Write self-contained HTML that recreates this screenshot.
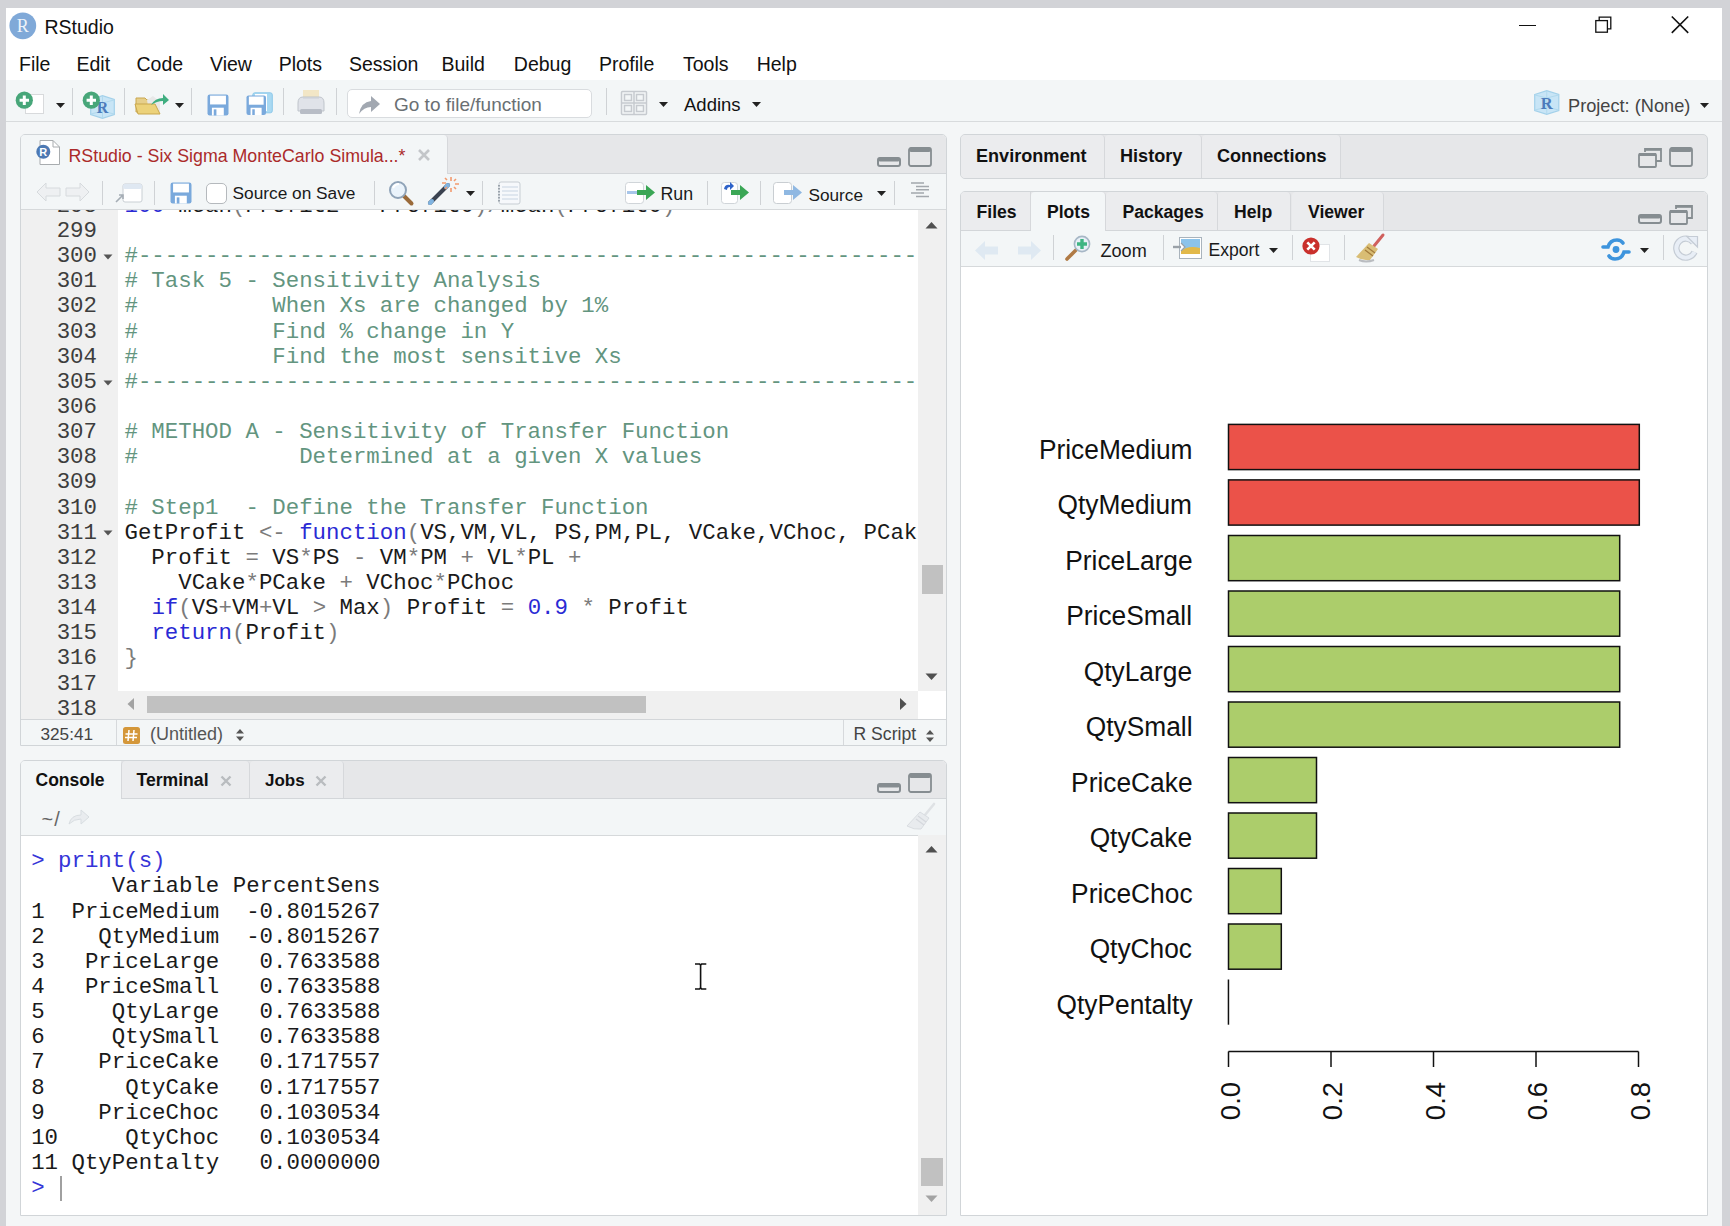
<!DOCTYPE html>
<html><head><meta charset="utf-8">
<style>
*{margin:0;padding:0;box-sizing:border-box}
html,body{width:1730px;height:1226px;overflow:hidden;background:#d2d3d7;font-family:"Liberation Sans",sans-serif;color:#111;position:relative}
.a{position:absolute}
.t{position:absolute;white-space:pre;line-height:1}
</style></head><body>
<div class="a" style="left:6px;top:8px;width:1716px;height:1218px;background:#f4f6f7;"></div>
<div class="a" style="left:6px;top:8px;width:1716px;height:72px;background:#ffffff;"></div>
<div class="a" style="left:6px;top:80px;width:1716px;height:41px;background:#f3f6f7;"></div>
<div class="a" style="left:6px;top:120.6px;width:1716px;height:1.2px;background:#d8dbdd;"></div>
<svg class="a" style="left:9px;top:12px;" width="28" height="28" viewBox="0 0 28 28"><circle cx="13.8" cy="13.8" r="13.4" fill="#80a9d8"/><text x="13.8" y="20" font-family="Liberation Serif" font-size="18" fill="#eef3fa" text-anchor="middle">R</text></svg>
<div class="t" style="left:44.5px;top:18.09px;font-size:19.5px;color:#111;font-family:'Liberation Sans',sans-serif;">RStudio</div>
<div class="a" style="left:1519px;top:25px;width:17px;height:1.3px;background:#111;"></div>
<svg class="a" style="left:1590px;top:12px;" width="26" height="26" viewBox="0 0 26 26"><rect x="5.8" y="8.6" width="11.6" height="11.6" fill="none" stroke="#111" stroke-width="1.3"/><path d="M9.2 8.6V5.2H20.8V16.8H17.4" fill="none" stroke="#111" stroke-width="1.3"/></svg>
<svg class="a" style="left:1666px;top:11px;" width="28" height="28" viewBox="0 0 28 28"><path d="M5.8 5.5L22.2 21.9M22.2 5.5L5.8 21.9" stroke="#111" stroke-width="1.6"/></svg>
<div class="t" style="left:19.0px;top:55.09px;font-size:19.5px;color:#111;font-family:'Liberation Sans',sans-serif;">File</div>
<div class="t" style="left:76.5px;top:55.09px;font-size:19.5px;color:#111;font-family:'Liberation Sans',sans-serif;">Edit</div>
<div class="t" style="left:136.5px;top:55.09px;font-size:19.5px;color:#111;font-family:'Liberation Sans',sans-serif;">Code</div>
<div class="t" style="left:210.0px;top:55.09px;font-size:19.5px;color:#111;font-family:'Liberation Sans',sans-serif;">View</div>
<div class="t" style="left:278.7px;top:55.09px;font-size:19.5px;color:#111;font-family:'Liberation Sans',sans-serif;">Plots</div>
<div class="t" style="left:349.0px;top:55.09px;font-size:19.5px;color:#111;font-family:'Liberation Sans',sans-serif;">Session</div>
<div class="t" style="left:441.5px;top:55.09px;font-size:19.5px;color:#111;font-family:'Liberation Sans',sans-serif;">Build</div>
<div class="t" style="left:513.8px;top:55.09px;font-size:19.5px;color:#111;font-family:'Liberation Sans',sans-serif;">Debug</div>
<div class="t" style="left:599.0px;top:55.09px;font-size:19.5px;color:#111;font-family:'Liberation Sans',sans-serif;">Profile</div>
<div class="t" style="left:683.0px;top:55.09px;font-size:19.5px;color:#111;font-family:'Liberation Sans',sans-serif;">Tools</div>
<div class="t" style="left:756.7px;top:55.09px;font-size:19.5px;color:#111;font-family:'Liberation Sans',sans-serif;">Help</div>
<div class="a" style="left:24.8px;top:93.8px;width:19px;height:20.5px;background:#fff;border:1px solid #d8dadc"></div>
<svg class="a" style="left:15px;top:91px;" width="18" height="18" viewBox="0 0 18 18"><circle cx="9.3" cy="9.2" r="8.6" fill="#47a679"/><path d="M9.3 4.5V13.9M4.6 9.2H14" stroke="#fff" stroke-width="3"/></svg>
<svg class="a" style="left:56.0px;top:102.5px;" width="9" height="5" viewBox="0 0 9 5"><path d="M0 0H9L4.5 5Z" fill="#222"/></svg>
<div class="a" style="left:72px;top:88px;width:1px;height:27px;background:#cfd2d5;"></div>
<svg class="a" style="left:90px;top:94.5px;" width="25" height="24" viewBox="0 0 25 24"><path d="M0.7 4.5L12.5 0.7L24.3 4.5V19.5L12.5 23.3L0.7 19.5Z" fill="#c8e5f6" stroke="#a3d1ea" stroke-width="1.2"/><path d="M12.5 1V23M1 5L12.5 8L24 5M1 19L12.5 16L24 19" stroke="#b0d9ee" stroke-width="1" fill="none"/><text x="12.5" y="17.759999999999998" font-family="Liberation Serif" font-weight="bold" font-size="15.84" fill="#4d7cbc" text-anchor="middle">R</text></svg>
<svg class="a" style="left:82px;top:91px;" width="18" height="18" viewBox="0 0 18 18"><circle cx="9.3" cy="9.2" r="8.6" fill="#47a679"/><path d="M9.3 4.5V13.9M4.6 9.2H14" stroke="#fff" stroke-width="3"/></svg>
<div class="a" style="left:124px;top:88px;width:1px;height:27px;background:#cfd2d5;"></div>
<svg class="a" style="left:133px;top:92px;" width="38" height="25" viewBox="0 0 38 25"><path d="M3 6H12L14 8H24V20H3Z" fill="#e6cf8b" stroke="#c9a74e" stroke-width="1"/><path d="M14 8L20 4L27 10V20H16Z" fill="#e8e8e8"/><path d="M2 12H22L27 22H5Z" fill="#ecd27a" stroke="#c9a74e" stroke-width="1"/><path d="M18 13Q22 6 30 6V2L36 8L30 13V9Q24 9 18 13Z" fill="#3fae80"/></svg>
<svg class="a" style="left:175.2px;top:102.5px;" width="9" height="5" viewBox="0 0 9 5"><path d="M0 0H9L4.5 5Z" fill="#222"/></svg>
<div class="a" style="left:191px;top:88px;width:1px;height:27px;background:#cfd2d5;"></div>
<svg class="a" style="left:207px;top:93.5px;" width="22.5" height="22.5" viewBox="0 0 22.5 22.5"><g transform="scale(1.0238095238095237)"><rect x="0.5" y="0.5" width="20.5" height="20.5" rx="2.2" fill="#7aa9dc"/><rect x="3" y="1.6" width="15.5" height="8.6" fill="#fff"/><rect x="4.8" y="13.4" width="11.6" height="7.6" fill="#fff"/><rect x="6.6" y="15" width="2.6" height="6" fill="#7aa9dc"/></g></svg>
<svg class="a" style="left:252px;top:91.5px;" width="22" height="22" viewBox="0 0 22 22"><rect x="0.8" y="0.8" width="19.5" height="20" rx="2" fill="#a9d9f2" stroke="#8cc8ea" stroke-width="1"/><rect x="3" y="2" width="12" height="17" fill="#fff"/></svg>
<svg class="a" style="left:246px;top:95px;" width="21" height="21" viewBox="0 0 21 21"><g transform="scale(0.9523809523809523)"><rect x="0.5" y="0.5" width="20.5" height="20.5" rx="2.2" fill="#7aa9dc"/><rect x="3" y="1.6" width="15.5" height="8.6" fill="#fff"/><rect x="4.8" y="13.4" width="11.6" height="7.6" fill="#fff"/><rect x="6.6" y="15" width="2.6" height="6" fill="#7aa9dc"/></g></svg>
<div class="a" style="left:283px;top:88px;width:1px;height:27px;background:#cfd2d5;"></div>
<svg class="a" style="left:295px;top:88px;" width="32" height="30" viewBox="0 0 32 30"><rect x="8" y="2" width="16" height="12" fill="#f2e6c6"/><path d="M3 15Q3 9 8 9H24Q29 9 29 15V23H3Z" fill="#e0e3e9" stroke="#bfc4cb" stroke-width="1"/><path d="M8 10H24" stroke="#c9ced5" stroke-width="1"/><rect x="5" y="21" width="22" height="5" rx="1.5" fill="#b8bdc6"/></svg>
<div class="a" style="left:336px;top:88px;width:1px;height:27px;background:#cfd2d5;"></div>
<div class="a" style="left:347px;top:89px;width:245px;height:29px;background:#fff;border:1px solid #d9dcdf;border-radius:5px"></div>
<svg class="a" style="left:356px;top:92px;" width="26" height="24" viewBox="0 0 26 24"><path d="M3 22Q5 10 15 9V4L24 12L15 20V15Q8 15 3 22Z" fill="#a2a8b1"/></svg>
<div class="t" style="left:394.0px;top:95.41px;font-size:19px;color:#6a6f73;font-family:'Liberation Sans',sans-serif;">Go to file/function</div>
<div class="a" style="left:606px;top:88px;width:1px;height:27px;background:#cfd2d5;"></div>
<svg class="a" style="left:619px;top:88.5px;" width="30" height="28" viewBox="0 0 30 28"><g fill="none" stroke="#c6cacf" stroke-width="1.5"><rect x="2.5" y="2.5" width="25" height="23" rx="1"/><path d="M15 3V25M3 14H27"/><rect x="5.5" y="5.5" width="7" height="6"/><rect x="17.5" y="5.5" width="7" height="6"/><rect x="5.5" y="16.5" width="7" height="6"/><rect x="17.5" y="16.5" width="7" height="6"/></g></svg>
<svg class="a" style="left:659.0px;top:101.8px;" width="9" height="5" viewBox="0 0 9 5"><path d="M0 0H9L4.5 5Z" fill="#222"/></svg>
<div class="t" style="left:684.0px;top:95.84px;font-size:18.5px;color:#111;font-family:'Liberation Sans',sans-serif;">Addins</div>
<svg class="a" style="left:751.5px;top:101.8px;" width="9" height="5" viewBox="0 0 9 5"><path d="M0 0H9L4.5 5Z" fill="#222"/></svg>
<svg class="a" style="left:1534px;top:90px;" width="25.5" height="25" viewBox="0 0 25.5 25"><path d="M0.7 4.5L12.75 0.7L24.8 4.5V20.5L12.75 24.3L0.7 20.5Z" fill="#c8e5f6" stroke="#a3d1ea" stroke-width="1.2"/><path d="M12.75 1V24M1 5L12.75 8L24.5 5M1 20L12.75 17L24.5 20" stroke="#b0d9ee" stroke-width="1" fill="none"/><text x="12.75" y="18.5" font-family="Liberation Serif" font-weight="bold" font-size="16.5" fill="#4d7cbc" text-anchor="middle">R</text></svg>
<div class="t" style="left:1568.0px;top:96.59px;font-size:18.2px;color:#444;font-family:'Liberation Sans',sans-serif;">Project: (None)</div>
<svg class="a" style="left:1700.0px;top:102.5px;" width="9" height="5" viewBox="0 0 9 5"><path d="M0 0H9L4.5 5Z" fill="#222"/></svg>
<div class="a" style="left:20px;top:134px;width:927px;height:612px;background:#fff;border:1px solid #d1d5d8;border-radius:5px 5px 0 0"></div>
<div class="a" style="left:21px;top:135px;width:925px;height:38px;background:#e6e7e9;border-radius:4px 4px 0 0"></div>
<div class="a" style="left:21px;top:173px;width:925px;height:1px;background:#d3d6d9;"></div>
<div class="a" style="left:21px;top:135px;width:427px;height:39px;background:#f3f6f7;border-right:1px solid #d6d8db;border-radius:4px 4px 0 0"></div>
<svg class="a" style="left:36px;top:139px;" width="28" height="28" viewBox="0 0 28 28"><path d="M4 1.5H17L23.5 8V25.5H4Z" fill="#fff" stroke="#a8acaf" stroke-width="1"/><path d="M17 1.5V8H23.5" fill="none" stroke="#a8acaf" stroke-width="1"/><circle cx="7.3" cy="12.8" r="7" fill="#4d79b3"/><text x="7.3" y="17" font-family="Liberation Sans" font-weight="bold" font-size="11" fill="#fff" text-anchor="middle">R</text></svg>
<div class="t" style="left:68.5px;top:148.13px;font-size:17.8px;color:#ab2a2a;font-family:'Liberation Sans',sans-serif;">RStudio - Six Sigma MonteCarlo Simula...*</div>
<svg class="a" style="left:417px;top:148px;" width="14" height="14" viewBox="0 0 14 14"><path d="M2 2L12 12M12 2L2 12" stroke="#c3c6c9" stroke-width="2.6"/></svg>
<svg class="a" style="left:877px;top:157px;" width="24" height="10" viewBox="0 0 24 10"><rect x="1" y="1" width="22" height="8" rx="2" fill="none" stroke="#868d91" stroke-width="2"/><rect x="1" y="0.5" width="22" height="4" rx="2" fill="#868d91"/></svg>
<svg class="a" style="left:907.5px;top:147px;" width="24" height="20" viewBox="0 0 24 20"><rect x="1" y="1" width="22" height="18" rx="2" fill="none" stroke="#868d91" stroke-width="1.8"/><rect x="1" y="0.5" width="22" height="4.5" rx="2" fill="#868d91"/></svg>
<div class="a" style="left:21px;top:174px;width:925px;height:36px;background:#f3f6f7;"></div>
<div class="a" style="left:21px;top:209px;width:925px;height:1px;background:#d6d9db;"></div>
<svg class="a" style="left:36px;top:170px;top:180px" width="26" height="24" viewBox="0 0 26 24"><path d="M1 12L10 3V8H24V16H10V21Z" fill="#eef0f2" stroke="#d6dadd" stroke-width="1"/></svg>
<svg class="a" style="left:64px;top:180px;" width="26" height="24" viewBox="0 0 26 24"><g transform="translate(26,0) scale(-1,1)"><path d="M1 12L10 3V8H24V16H10V21Z" fill="#eef0f2" stroke="#d6dadd" stroke-width="1"/></g></svg>
<div class="a" style="left:101.5px;top:181px;width:1px;height:24px;background:#cfd2d5;"></div>
<svg class="a" style="left:114px;top:181px;" width="30" height="24" viewBox="0 0 30 24"><rect x="9" y="3" width="19" height="18" rx="2" fill="#fff" stroke="#c9cfd4" stroke-width="1"/><rect x="9" y="3" width="19" height="5" rx="2" fill="#dfe8f2"/><path d="M2 21L9 14M5 14H9V18" stroke="#a5adb5" stroke-width="1.6" fill="none"/></svg>
<div class="a" style="left:153.5px;top:181px;width:1px;height:24px;background:#cfd2d5;"></div>
<svg class="a" style="left:170px;top:182px;" width="22.5" height="22.5" viewBox="0 0 22.5 22.5"><g transform="scale(1.0238095238095237)"><rect x="0.5" y="0.5" width="20.5" height="20.5" rx="2.2" fill="#7aa9dc"/><rect x="3" y="1.6" width="15.5" height="8.6" fill="#fff"/><rect x="4.8" y="13.4" width="11.6" height="7.6" fill="#fff"/><rect x="6.6" y="15" width="2.6" height="6" fill="#7aa9dc"/></g></svg>
<div class="a" style="left:205.5px;top:182.5px;width:21px;height:21px;background:#fff;border:1.3px solid #b5b9bd;border-radius:5px"></div>
<div class="t" style="left:232.5px;top:184.85px;font-size:17.3px;color:#1a1a1a;font-family:'Liberation Sans',sans-serif;">Source on Save</div>
<div class="a" style="left:374px;top:181px;width:1px;height:24px;background:#cfd2d5;"></div>
<svg class="a" style="left:387px;top:179px;" width="28" height="28" viewBox="0 0 28 28"><path d="M16 16L24.5 24.5" stroke="#9a6a3a" stroke-width="4" stroke-linecap="round"/><circle cx="11" cy="11" r="8" fill="#eaf3fb" stroke="#8fa3b8" stroke-width="2"/><path d="M6 9Q8 5 12 5" stroke="#fff" stroke-width="2" fill="none"/></svg>
<svg class="a" style="left:425px;top:175px;" width="36" height="32" viewBox="0 0 36 32"><path d="M5 28L23 10" stroke="#3a4250" stroke-width="4" stroke-linecap="round"/><path d="M5 28L7 26M21 12L23 10" stroke="#7fb3e0" stroke-width="4" stroke-linecap="round"/><path d="M26 2V6M26 13V17M17 8H21M30 9H34M20 3L22 5M31 14L29 12M31 4L29 6M20 14L22 12" stroke="#f29a6e" stroke-width="1.6"/></svg>
<svg class="a" style="left:466.0px;top:190.5px;" width="9" height="5" viewBox="0 0 9 5"><path d="M0 0H9L4.5 5Z" fill="#222"/></svg>
<div class="a" style="left:482px;top:181px;width:1px;height:24px;background:#cfd2d5;"></div>
<svg class="a" style="left:496px;top:180px;" width="28" height="26" viewBox="0 0 28 26"><rect x="3" y="2" width="21" height="22" rx="2" fill="#f6f8fb" stroke="#c7cdd3" stroke-width="1"/><path d="M6 7H22M6 11H22M6 15H22M6 19H22" stroke="#c8d4e2" stroke-width="1"/><path d="M3 5V22" stroke="#9aa3ab" stroke-width="2" stroke-dasharray="1.5 1.5"/></svg>
<svg class="a" style="left:623px;top:180px;" width="36" height="26" viewBox="0 0 36 26"><rect x="2.5" y="2.5" width="18" height="21" rx="3" fill="#fff" stroke="#d0d5d9" stroke-width="1"/><rect x="4" y="11" width="12" height="3" fill="#a7c6ea"/><path d="M14 10H23V5L32 12.5L23 20V15H14Z" fill="#3aa655"/></svg>
<div class="t" style="left:660.5px;top:186.13px;font-size:17.8px;color:#1a1a1a;font-family:'Liberation Sans',sans-serif;">Run</div>
<div class="a" style="left:707px;top:181px;width:1px;height:24px;background:#cfd2d5;"></div>
<svg class="a" style="left:719px;top:180px;" width="36" height="26" viewBox="0 0 36 26"><rect x="2.5" y="2.5" width="16" height="21" rx="3" fill="#fff" stroke="#d0d5d9" stroke-width="1"/><path d="M5 9Q6 4 11 5L11 2L15 6L11 10V7Q8 7 8 10Z" fill="#2e63c9"/><path d="M12 10H21V5L30 12.5L21 20V15H12Z" fill="#3aa655"/></svg>
<div class="a" style="left:760px;top:181px;width:1px;height:24px;background:#cfd2d5;"></div>
<svg class="a" style="left:771px;top:180px;" width="34" height="26" viewBox="0 0 34 26"><rect x="2.5" y="2.5" width="18" height="21" rx="3" fill="#fff" stroke="#c9ced2" stroke-width="1"/><path d="M13 10H22V5L31 12.5L22 20V15H13Z" fill="#8fb8e2"/></svg>
<div class="t" style="left:808.5px;top:186.64px;font-size:17.2px;color:#1a1a1a;font-family:'Liberation Sans',sans-serif;">Source</div>
<svg class="a" style="left:877.1px;top:190.6px;" width="9" height="5" viewBox="0 0 9 5"><path d="M0 0H9L4.5 5Z" fill="#222"/></svg>
<div class="a" style="left:893.5px;top:181px;width:1px;height:24px;background:#cfd2d5;"></div>
<svg class="a" style="left:909px;top:181px;" width="22" height="18" viewBox="0 0 22 18"><path d="M2 2H15M7 5.5H20M7 8.7H20M2 12H15M7 15.5H20" stroke="#a3a8ad" stroke-width="1.6"/></svg>
<div class="a" style="left:21px;top:210px;width:97px;height:509px;background:#f0f0f0;"></div>
<div class="a" style="left:118px;top:210px;width:801px;height:480px;overflow:hidden"><div class="t" style="left:6.5px;top:-15.10px;font-size:22.4px;color:#1a1a1a;font-family:'Liberation Mono',monospace;"><span style="color:#2a2ad4">100</span><span style="color:#1a1a1a"> </span><span style="color:#1a1a1a">mean</span><span style="color:#7b7b7b">(</span><span style="color:#1a1a1a">Profit2</span><span style="color:#7b7b7b"> - </span><span style="color:#1a1a1a">Profit0</span><span style="color:#7b7b7b">)/</span><span style="color:#1a1a1a">mean</span><span style="color:#7b7b7b">(</span><span style="color:#1a1a1a">Profit0</span><span style="color:#7b7b7b">)</span></div>
<div class="t" style="left:6.5px;top:10.04px;font-size:22.4px;color:#1a1a1a;font-family:'Liberation Mono',monospace;"></div>
<div class="t" style="left:6.5px;top:35.18px;font-size:22.4px;color:#1a1a1a;font-family:'Liberation Mono',monospace;"><span style="color:#63957f">#--------------------------------------------------------------------------------</span></div>
<div class="t" style="left:6.5px;top:60.32px;font-size:22.4px;color:#1a1a1a;font-family:'Liberation Mono',monospace;"><span style="color:#63957f"># Task 5 - Sensitivity Analysis</span></div>
<div class="t" style="left:6.5px;top:85.46px;font-size:22.4px;color:#1a1a1a;font-family:'Liberation Mono',monospace;"><span style="color:#63957f">#          When Xs are changed by 1%</span></div>
<div class="t" style="left:6.5px;top:110.60px;font-size:22.4px;color:#1a1a1a;font-family:'Liberation Mono',monospace;"><span style="color:#63957f">#          Find % change in Y</span></div>
<div class="t" style="left:6.5px;top:135.74px;font-size:22.4px;color:#1a1a1a;font-family:'Liberation Mono',monospace;"><span style="color:#63957f">#          Find the most sensitive Xs</span></div>
<div class="t" style="left:6.5px;top:160.88px;font-size:22.4px;color:#1a1a1a;font-family:'Liberation Mono',monospace;"><span style="color:#63957f">#--------------------------------------------------------------------------------</span></div>
<div class="t" style="left:6.5px;top:186.02px;font-size:22.4px;color:#1a1a1a;font-family:'Liberation Mono',monospace;"></div>
<div class="t" style="left:6.5px;top:211.16px;font-size:22.4px;color:#1a1a1a;font-family:'Liberation Mono',monospace;"><span style="color:#63957f"># METHOD A - Sensitivity of Transfer Function</span></div>
<div class="t" style="left:6.5px;top:236.30px;font-size:22.4px;color:#1a1a1a;font-family:'Liberation Mono',monospace;"><span style="color:#63957f">#            Determined at a given X values</span></div>
<div class="t" style="left:6.5px;top:261.44px;font-size:22.4px;color:#1a1a1a;font-family:'Liberation Mono',monospace;"></div>
<div class="t" style="left:6.5px;top:286.58px;font-size:22.4px;color:#1a1a1a;font-family:'Liberation Mono',monospace;"><span style="color:#63957f"># Step1  - Define the Transfer Function</span></div>
<div class="t" style="left:6.5px;top:311.72px;font-size:22.4px;color:#1a1a1a;font-family:'Liberation Mono',monospace;"><span style="color:#1a1a1a">GetProfit </span><span style="color:#7b7b7b">&lt;-</span><span style="color:#1a1a1a"> </span><span style="color:#2a2ad4">function</span><span style="color:#7b7b7b">(</span><span style="color:#1a1a1a">VS</span><span style="color:#1a1a1a">,</span><span style="color:#1a1a1a">VM</span><span style="color:#1a1a1a">,</span><span style="color:#1a1a1a">VL</span><span style="color:#1a1a1a">,</span><span style="color:#1a1a1a"> PS</span><span style="color:#1a1a1a">,</span><span style="color:#1a1a1a">PM</span><span style="color:#1a1a1a">,</span><span style="color:#1a1a1a">PL</span><span style="color:#1a1a1a">,</span><span style="color:#1a1a1a"> VCake</span><span style="color:#1a1a1a">,</span><span style="color:#1a1a1a">VChoc</span><span style="color:#1a1a1a">,</span><span style="color:#1a1a1a"> PCake</span><span style="color:#1a1a1a">,</span><span style="color:#1a1a1a">PChoc</span><span style="color:#7b7b7b">)</span></div>
<div class="t" style="left:6.5px;top:336.86px;font-size:22.4px;color:#1a1a1a;font-family:'Liberation Mono',monospace;"><span style="color:#1a1a1a">  Profit </span><span style="color:#7b7b7b">=</span><span style="color:#1a1a1a"> VS</span><span style="color:#7b7b7b">*</span><span style="color:#1a1a1a">PS </span><span style="color:#7b7b7b">-</span><span style="color:#1a1a1a"> VM</span><span style="color:#7b7b7b">*</span><span style="color:#1a1a1a">PM </span><span style="color:#7b7b7b">+</span><span style="color:#1a1a1a"> VL</span><span style="color:#7b7b7b">*</span><span style="color:#1a1a1a">PL </span><span style="color:#7b7b7b">+</span></div>
<div class="t" style="left:6.5px;top:362.00px;font-size:22.4px;color:#1a1a1a;font-family:'Liberation Mono',monospace;"><span style="color:#1a1a1a">    VCake</span><span style="color:#7b7b7b">*</span><span style="color:#1a1a1a">PCake </span><span style="color:#7b7b7b">+</span><span style="color:#1a1a1a"> VChoc</span><span style="color:#7b7b7b">*</span><span style="color:#1a1a1a">PChoc</span></div>
<div class="t" style="left:6.5px;top:387.14px;font-size:22.4px;color:#1a1a1a;font-family:'Liberation Mono',monospace;"><span style="color:#1a1a1a">  </span><span style="color:#2a2ad4">if</span><span style="color:#7b7b7b">(</span><span style="color:#1a1a1a">VS</span><span style="color:#7b7b7b">+</span><span style="color:#1a1a1a">VM</span><span style="color:#7b7b7b">+</span><span style="color:#1a1a1a">VL </span><span style="color:#7b7b7b">&gt;</span><span style="color:#1a1a1a"> Max</span><span style="color:#7b7b7b">)</span><span style="color:#1a1a1a"> Profit </span><span style="color:#7b7b7b">=</span><span style="color:#1a1a1a"> </span><span style="color:#2a2ad4">0.9</span><span style="color:#1a1a1a"> </span><span style="color:#7b7b7b">*</span><span style="color:#1a1a1a"> Profit</span></div>
<div class="t" style="left:6.5px;top:412.28px;font-size:22.4px;color:#1a1a1a;font-family:'Liberation Mono',monospace;"><span style="color:#1a1a1a">  </span><span style="color:#2a2ad4">return</span><span style="color:#7b7b7b">(</span><span style="color:#1a1a1a">Profit</span><span style="color:#7b7b7b">)</span></div>
<div class="t" style="left:6.5px;top:437.42px;font-size:22.4px;color:#1a1a1a;font-family:'Liberation Mono',monospace;"><span style="color:#7b7b7b">}</span></div>
<div class="t" style="left:6.5px;top:462.56px;font-size:22.4px;color:#1a1a1a;font-family:'Liberation Mono',monospace;"></div>
</div>
<div class="a" style="left:21px;top:210px;width:97px;height:509px;overflow:hidden"><div class="t" style="left:35.7px;top:-15.10px;font-size:22.4px;color:#3d3d3d;font-family:'Liberation Mono',monospace;">298</div>
<div class="t" style="left:35.7px;top:10.04px;font-size:22.4px;color:#3d3d3d;font-family:'Liberation Mono',monospace;">299</div>
<div class="t" style="left:35.7px;top:35.18px;font-size:22.4px;color:#3d3d3d;font-family:'Liberation Mono',monospace;">300</div>
<div class="t" style="left:35.7px;top:60.32px;font-size:22.4px;color:#3d3d3d;font-family:'Liberation Mono',monospace;">301</div>
<div class="t" style="left:35.7px;top:85.46px;font-size:22.4px;color:#3d3d3d;font-family:'Liberation Mono',monospace;">302</div>
<div class="t" style="left:35.7px;top:110.60px;font-size:22.4px;color:#3d3d3d;font-family:'Liberation Mono',monospace;">303</div>
<div class="t" style="left:35.7px;top:135.74px;font-size:22.4px;color:#3d3d3d;font-family:'Liberation Mono',monospace;">304</div>
<div class="t" style="left:35.7px;top:160.88px;font-size:22.4px;color:#3d3d3d;font-family:'Liberation Mono',monospace;">305</div>
<div class="t" style="left:35.7px;top:186.02px;font-size:22.4px;color:#3d3d3d;font-family:'Liberation Mono',monospace;">306</div>
<div class="t" style="left:35.7px;top:211.16px;font-size:22.4px;color:#3d3d3d;font-family:'Liberation Mono',monospace;">307</div>
<div class="t" style="left:35.7px;top:236.30px;font-size:22.4px;color:#3d3d3d;font-family:'Liberation Mono',monospace;">308</div>
<div class="t" style="left:35.7px;top:261.44px;font-size:22.4px;color:#3d3d3d;font-family:'Liberation Mono',monospace;">309</div>
<div class="t" style="left:35.7px;top:286.58px;font-size:22.4px;color:#3d3d3d;font-family:'Liberation Mono',monospace;">310</div>
<div class="t" style="left:35.7px;top:311.72px;font-size:22.4px;color:#3d3d3d;font-family:'Liberation Mono',monospace;">311</div>
<div class="t" style="left:35.7px;top:336.86px;font-size:22.4px;color:#3d3d3d;font-family:'Liberation Mono',monospace;">312</div>
<div class="t" style="left:35.7px;top:362.00px;font-size:22.4px;color:#3d3d3d;font-family:'Liberation Mono',monospace;">313</div>
<div class="t" style="left:35.7px;top:387.14px;font-size:22.4px;color:#3d3d3d;font-family:'Liberation Mono',monospace;">314</div>
<div class="t" style="left:35.7px;top:412.28px;font-size:22.4px;color:#3d3d3d;font-family:'Liberation Mono',monospace;">315</div>
<div class="t" style="left:35.7px;top:437.42px;font-size:22.4px;color:#3d3d3d;font-family:'Liberation Mono',monospace;">316</div>
<div class="t" style="left:35.7px;top:462.56px;font-size:22.4px;color:#3d3d3d;font-family:'Liberation Mono',monospace;">317</div>
<div class="t" style="left:35.7px;top:487.70px;font-size:22.4px;color:#3d3d3d;font-family:'Liberation Mono',monospace;">318</div>
</div>
<svg class="a" style="left:102.5px;top:253.83999999999997px;" width="10" height="6" viewBox="0 0 10 6"><path d="M0.5 0.5H9.5L5 5.5Z" fill="#555"/></svg>
<svg class="a" style="left:102.5px;top:379.53999999999996px;" width="10" height="6" viewBox="0 0 10 6"><path d="M0.5 0.5H9.5L5 5.5Z" fill="#555"/></svg>
<svg class="a" style="left:102.5px;top:530.38px;" width="10" height="6" viewBox="0 0 10 6"><path d="M0.5 0.5H9.5L5 5.5Z" fill="#555"/></svg>
<div class="a" style="left:918px;top:210px;width:28px;height:481px;background:#f0f0f0;"></div>
<svg class="a" style="left:925px;top:221px;" width="13" height="8" viewBox="0 0 13 8"><path d="M0.5 7.5L6.5 1L12.5 7.5Z" fill="#505050"/></svg>
<svg class="a" style="left:925px;top:672.5px;" width="13" height="8" viewBox="0 0 13 8"><path d="M0.5 0.5L6.5 7L12.5 0.5Z" fill="#505050"/></svg>
<div class="a" style="left:921.5px;top:564.5px;width:21px;height:29px;background:#c1c1c1;"></div>
<div class="a" style="left:118px;top:691px;width:800px;height:28px;background:#f0f0f0;"></div>
<div class="a" style="left:918px;top:691px;width:28px;height:28px;background:#ffffff;"></div>
<svg class="a" style="left:126px;top:697px;" width="9" height="14" viewBox="0 0 9 14"><path d="M8 1V13L1.5 7Z" fill="#a3a3a3"/></svg>
<svg class="a" style="left:899px;top:697px;" width="9" height="14" viewBox="0 0 9 14"><path d="M1 1V13L7.5 7Z" fill="#505050"/></svg>
<div class="a" style="left:147px;top:696px;width:499px;height:17px;background:#c1c1c1;"></div>
<div class="a" style="left:21px;top:718.5px;width:925px;height:1px;background:#d3d6d9;"></div>
<div class="a" style="left:21px;top:719.5px;width:925px;height:25.5px;background:#f3f6f7;"></div>
<div class="t" style="left:40.5px;top:726.44px;font-size:17.2px;color:#444;font-family:'Liberation Sans',sans-serif;">325:41</div>
<div class="a" style="left:115.8px;top:720px;width:1px;height:25px;background:#d6d9dc;"></div>
<svg class="a" style="left:122px;top:725.5px;" width="20" height="20" viewBox="0 0 20 20"><rect x="1" y="1" width="17" height="17" rx="2.5" fill="#d4973a"/><path d="M7 4L6 15M12 4L11 15M3.5 8H15.5M3 11.5H15" stroke="#fff" stroke-width="1.5"/></svg>
<div class="t" style="left:150.0px;top:725.06px;font-size:18px;color:#555;font-family:'Liberation Sans',sans-serif;">(Untitled)</div>
<svg class="a" style="left:235px;top:727.5px;" width="10" height="14" viewBox="0 0 10 14"><path d="M1 5.5L5 1L9 5.5Z M1 8.5L5 13L9 8.5Z" fill="#555"/></svg>
<div class="a" style="left:843px;top:720px;width:1px;height:25px;background:#d6d9dc;"></div>
<div class="t" style="left:853.5px;top:726.30px;font-size:17.6px;color:#444;font-family:'Liberation Sans',sans-serif;">R Script</div>
<svg class="a" style="left:925px;top:728.5px;" width="10" height="14" viewBox="0 0 10 14"><path d="M1 5.5L5 1L9 5.5Z M1 8.5L5 13L9 8.5Z" fill="#555"/></svg>
<div class="a" style="left:20px;top:760px;width:927px;height:456px;background:#fff;border:1px solid #d1d5d8;border-radius:5px 5px 0 0"></div>
<div class="a" style="left:21px;top:761px;width:925px;height:37px;background:#e6e7e9;border-radius:4px 4px 0 0"></div>
<div class="a" style="left:21px;top:797.5px;width:925px;height:1px;background:#d3d6d9;"></div>
<div class="a" style="left:21px;top:761px;width:99.5px;height:37.5px;background:#f3f6f7;border-radius:4px 0 0 0"></div>
<div class="a" style="left:120.5px;top:761px;width:129px;height:37px;background:#ebecee;border-left:1px solid #d6d8db;border-right:1px solid #d6d8db;border-radius:4px 4px 0 0"></div>
<div class="a" style="left:249.5px;top:761px;width:94px;height:37px;background:#ebecee;border-right:1px solid #d6d8db;border-radius:4px 4px 0 0"></div>
<div class="t" style="left:35.5px;top:771.58px;font-size:17.5px;color:#111;font-family:'Liberation Sans',sans-serif;font-weight:bold;">Console</div>
<div class="t" style="left:136.5px;top:771.50px;font-size:17.6px;color:#111;font-family:'Liberation Sans',sans-serif;font-weight:bold;">Terminal</div>
<svg class="a" style="left:219px;top:774px;" width="14" height="14" viewBox="0 0 14 14"><path d="M2.5 2.5L11.5 11.5M11.5 2.5L2.5 11.5" stroke="#b9bcbf" stroke-width="2.4"/></svg>
<div class="t" style="left:265.0px;top:772.01px;font-size:17.0px;color:#111;font-family:'Liberation Sans',sans-serif;font-weight:bold;">Jobs</div>
<svg class="a" style="left:313.5px;top:774px;" width="14" height="14" viewBox="0 0 14 14"><path d="M2.5 2.5L11.5 11.5M11.5 2.5L2.5 11.5" stroke="#b9bcbf" stroke-width="2.4"/></svg>
<svg class="a" style="left:876.5px;top:782.5px;" width="24" height="10" viewBox="0 0 24 10"><rect x="1" y="1" width="22" height="8" rx="2" fill="none" stroke="#868d91" stroke-width="2"/><rect x="1" y="0.5" width="22" height="4" rx="2" fill="#868d91"/></svg>
<svg class="a" style="left:907.5px;top:772.5px;" width="24" height="20" viewBox="0 0 24 20"><rect x="1" y="1" width="22" height="18" rx="2" fill="none" stroke="#868d91" stroke-width="1.8"/><rect x="1" y="0.5" width="22" height="4.5" rx="2" fill="#868d91"/></svg>
<div class="a" style="left:21px;top:798.5px;width:925px;height:36px;background:#f3f6f7;"></div>
<div class="a" style="left:21px;top:834.5px;width:925px;height:1px;background:#d6d9db;"></div>
<div class="t" style="left:41.5px;top:809.07px;font-size:20px;color:#666;font-family:'Liberation Sans',sans-serif;letter-spacing:1px">~/</div>
<svg class="a" style="left:66px;top:807px;" width="26" height="20" viewBox="0 0 26 20"><path d="M3 17Q5 8 15 8V3L23 10L15 17V12Q8 12 3 17Z" fill="#e9ecef" stroke="#d8dde1" stroke-width="1"/></svg>
<svg class="a" style="left:903px;top:801px;" width="36" height="32" viewBox="0 0 36 32"><path d="M31 3L22 14" stroke="#dfe2e5" stroke-width="2.6" stroke-linecap="round"/><path d="M17 11L26 17L18 28Q11 29 4 25Z" fill="#e8ebee" stroke="#d9dde1" stroke-width="1"/><path d="M15 15L23 21M13 18L21 24" stroke="#d5d9dd" stroke-width="1.2"/></svg>
<div class="a" style="left:21px;top:835px;width:897px;height:380px;overflow:hidden"><div class="t" style="left:10.2px;top:15.24px;font-size:22.4px;color:#3535d8;font-family:'Liberation Mono',monospace;">&gt; print(s)</div>
<div class="t" style="left:10.2px;top:40.38px;font-size:22.4px;color:#1a1a1a;font-family:'Liberation Mono',monospace;">      Variable PercentSens</div>
<div class="t" style="left:10.2px;top:65.52px;font-size:22.4px;color:#1a1a1a;font-family:'Liberation Mono',monospace;">1  PriceMedium  -0.8015267</div>
<div class="t" style="left:10.2px;top:90.66px;font-size:22.4px;color:#1a1a1a;font-family:'Liberation Mono',monospace;">2    QtyMedium  -0.8015267</div>
<div class="t" style="left:10.2px;top:115.80px;font-size:22.4px;color:#1a1a1a;font-family:'Liberation Mono',monospace;">3   PriceLarge   0.7633588</div>
<div class="t" style="left:10.2px;top:140.94px;font-size:22.4px;color:#1a1a1a;font-family:'Liberation Mono',monospace;">4   PriceSmall   0.7633588</div>
<div class="t" style="left:10.2px;top:166.08px;font-size:22.4px;color:#1a1a1a;font-family:'Liberation Mono',monospace;">5     QtyLarge   0.7633588</div>
<div class="t" style="left:10.2px;top:191.22px;font-size:22.4px;color:#1a1a1a;font-family:'Liberation Mono',monospace;">6     QtySmall   0.7633588</div>
<div class="t" style="left:10.2px;top:216.36px;font-size:22.4px;color:#1a1a1a;font-family:'Liberation Mono',monospace;">7    PriceCake   0.1717557</div>
<div class="t" style="left:10.2px;top:241.50px;font-size:22.4px;color:#1a1a1a;font-family:'Liberation Mono',monospace;">8      QtyCake   0.1717557</div>
<div class="t" style="left:10.2px;top:266.64px;font-size:22.4px;color:#1a1a1a;font-family:'Liberation Mono',monospace;">9    PriceChoc   0.1030534</div>
<div class="t" style="left:10.2px;top:291.78px;font-size:22.4px;color:#1a1a1a;font-family:'Liberation Mono',monospace;">10     QtyChoc   0.1030534</div>
<div class="t" style="left:10.2px;top:316.92px;font-size:22.4px;color:#1a1a1a;font-family:'Liberation Mono',monospace;">11 QtyPentalty   0.0000000</div>
<div class="t" style="left:10.2px;top:342.06px;font-size:22.4px;color:#3535d8;font-family:'Liberation Mono',monospace;">&gt;</div>
<div class="a" style="left:39px;top:341px;width:1.5px;height:25px;background:#a0a0a0;"></div>
</div>
<div class="a" style="left:918px;top:835px;width:28px;height:380px;background:#f0f0f0;"></div>
<svg class="a" style="left:925px;top:845px;" width="13" height="8" viewBox="0 0 13 8"><path d="M0.5 7.5L6.5 1L12.5 7.5Z" fill="#505050"/></svg>
<svg class="a" style="left:925px;top:1195px;" width="13" height="8" viewBox="0 0 13 8"><path d="M0.5 0.5L6.5 7L12.5 0.5Z" fill="#a3a3a3"/></svg>
<div class="a" style="left:921px;top:1157.5px;width:22px;height:28.5px;background:#c1c1c1;"></div>
<svg class="a" style="left:692px;top:960px;" width="18" height="34" viewBox="0 0 18 34"><path d="M3 4H7.6L8.6 5.2L9.6 4H14.3M8.6 5.2V27.8M3 29H7.6L8.6 27.8L9.6 29H14.3" stroke="#111" stroke-width="1.6" fill="none"/></svg>
<div class="a" style="left:960px;top:134px;width:748px;height:45px;background:#e6e7e9;border:1px solid #d1d5d8;border-radius:5px"></div>
<div class="a" style="left:961px;top:135px;width:143.5px;height:43px;background:#ebecee;border-right:1px solid #d6d8db;border-radius:4px 4px 0 4px"></div>
<div class="a" style="left:1104.5px;top:135px;width:97px;height:43px;background:#ebecee;border-right:1px solid #d6d8db;border-radius:4px 4px 0 0"></div>
<div class="a" style="left:1201.5px;top:135px;width:139px;height:43px;background:#ebecee;border-right:1px solid #d6d8db;border-radius:4px 4px 0 0"></div>
<div class="t" style="left:976.0px;top:146.67px;font-size:18.1px;color:#111;font-family:'Liberation Sans',sans-serif;font-weight:bold;">Environment</div>
<div class="t" style="left:1120.0px;top:146.67px;font-size:18.1px;color:#111;font-family:'Liberation Sans',sans-serif;font-weight:bold;">History</div>
<div class="t" style="left:1217.0px;top:146.67px;font-size:18.1px;color:#111;font-family:'Liberation Sans',sans-serif;font-weight:bold;">Connections</div>
<svg class="a" style="left:1638px;top:146.5px;" width="24" height="21" viewBox="0 0 24 21"><path d="M7 5V2H23V14H18" fill="none" stroke="#868d91" stroke-width="1.8"/><rect x="1" y="7" width="17" height="13" rx="1" fill="none" stroke="#868d91" stroke-width="1.8"/><rect x="1" y="6" width="17" height="3" fill="#868d91"/><rect x="7" y="1.2" width="16" height="2.6" fill="#868d91"/></svg>
<svg class="a" style="left:1668.5px;top:147px;" width="24" height="20" viewBox="0 0 24 20"><rect x="1" y="1" width="22" height="18" rx="2" fill="none" stroke="#868d91" stroke-width="1.8"/><rect x="1" y="0.5" width="22" height="4.5" rx="2" fill="#868d91"/></svg>
<div class="a" style="left:960px;top:191px;width:748px;height:1025px;background:#fff;border:1px solid #d1d5d8;border-radius:5px 5px 0 0"></div>
<div class="a" style="left:961px;top:192px;width:746px;height:38px;background:#e6e7e9;border-radius:4px 4px 0 0"></div>
<div class="a" style="left:961px;top:229.5px;width:746px;height:1px;background:#d3d6d9;"></div>
<div class="a" style="left:961px;top:192px;width:69.5px;height:38px;background:#ebecee;border-right:1px solid #d6d8db;border-radius:4px 0 0 0"></div>
<div class="t" style="left:976.5px;top:204.10px;font-size:17.6px;color:#111;font-family:'Liberation Sans',sans-serif;font-weight:bold;">Files</div>
<div class="a" style="left:1030.5px;top:192px;width:75.09999999999991px;height:39px;background:#f3f6f7;border-right:1px solid #d6d8db;border-radius:4px 4px 0 0"></div>
<div class="t" style="left:1047.0px;top:204.10px;font-size:17.6px;color:#111;font-family:'Liberation Sans',sans-serif;font-weight:bold;">Plots</div>
<div class="a" style="left:1105.6px;top:192px;width:112.20000000000005px;height:38px;background:#ebecee;border-right:1px solid #d6d8db;border-radius:4px 4px 0 0"></div>
<div class="t" style="left:1122.5px;top:204.10px;font-size:17.6px;color:#111;font-family:'Liberation Sans',sans-serif;font-weight:bold;">Packages</div>
<div class="a" style="left:1217.8px;top:192px;width:73.70000000000005px;height:38px;background:#ebecee;border-right:1px solid #d6d8db;border-radius:4px 4px 0 0"></div>
<div class="t" style="left:1234.0px;top:204.10px;font-size:17.6px;color:#111;font-family:'Liberation Sans',sans-serif;font-weight:bold;">Help</div>
<div class="a" style="left:1291.5px;top:192px;width:92.90000000000009px;height:38px;background:#ebecee;border-right:1px solid #d6d8db;border-radius:4px 4px 0 0"></div>
<div class="t" style="left:1308.0px;top:204.10px;font-size:17.6px;color:#111;font-family:'Liberation Sans',sans-serif;font-weight:bold;">Viewer</div>
<svg class="a" style="left:1638px;top:214px;" width="24" height="10" viewBox="0 0 24 10"><rect x="1" y="1" width="22" height="8" rx="2" fill="none" stroke="#868d91" stroke-width="2"/><rect x="1" y="0.5" width="22" height="4" rx="2" fill="#868d91"/></svg>
<svg class="a" style="left:1668.5px;top:203.5px;" width="24" height="21" viewBox="0 0 24 21"><path d="M7 5V2H23V14H18" fill="none" stroke="#868d91" stroke-width="1.8"/><rect x="1" y="7" width="17" height="13" rx="1" fill="none" stroke="#868d91" stroke-width="1.8"/><rect x="1" y="6" width="17" height="3" fill="#868d91"/><rect x="7" y="1.2" width="16" height="2.6" fill="#868d91"/></svg>
<div class="a" style="left:961px;top:230.5px;width:746px;height:35.5px;background:#f3f6f7;"></div>
<div class="a" style="left:961px;top:266px;width:746px;height:1px;background:#d6d9db;"></div>
<svg class="a" style="left:974px;top:240px;" width="25" height="21" viewBox="0 0 25 21"><path d="M1 10.5L11 1V6.5H24V14.5H11V20Z" fill="#dfe9f2"/></svg>
<svg class="a" style="left:1016.5px;top:240px;" width="25" height="21" viewBox="0 0 25 21"><g transform="translate(25,0) scale(-1,1)"><path d="M1 10.5L11 1V6.5H24V14.5H11V20Z" fill="#dfe9f2"/></g></svg>
<div class="a" style="left:1052.5px;top:235px;width:1px;height:25px;background:#cfd2d5;"></div>
<svg class="a" style="left:1064px;top:234px;" width="30" height="28" viewBox="0 0 30 28"><path d="M3 25L12 16" stroke="#b07a45" stroke-width="3.6" stroke-linecap="round"/><circle cx="18" cy="10" r="7.6" fill="#e8f0f7" stroke="#a7b7c6" stroke-width="1.6"/><path d="M18 5V15M13 10H23" stroke="#3fb583" stroke-width="3.4"/></svg>
<div class="t" style="left:1100.5px;top:241.97px;font-size:18.1px;color:#1a1a1a;font-family:'Liberation Sans',sans-serif;">Zoom</div>
<div class="a" style="left:1163px;top:235px;width:1px;height:25px;background:#cfd2d5;"></div>
<svg class="a" style="left:1172px;top:236px;" width="32" height="26" viewBox="0 0 32 26"><rect x="7.5" y="1.5" width="22" height="21" fill="#fff" stroke="#a9b3bc" stroke-width="1"/><rect x="9" y="3" width="19" height="11" fill="#8cc3ea"/><path d="M9 15Q16 9 28 12V18H9Z" fill="#e2b94a"/><rect x="9" y="18" width="19" height="3" fill="#fff"/><path d="M1 11H11" stroke="#9aa1a8" stroke-width="2.4"/><path d="M9 7L13 11L9 15" fill="#fff" stroke="#9aa1a8" stroke-width="1.2"/></svg>
<div class="t" style="left:1208.5px;top:242.40px;font-size:17.6px;color:#1a1a1a;font-family:'Liberation Sans',sans-serif;">Export</div>
<svg class="a" style="left:1269.1px;top:247.5px;" width="9" height="5" viewBox="0 0 9 5"><path d="M0 0H9L4.5 5Z" fill="#222"/></svg>
<div class="a" style="left:1292px;top:235px;width:1px;height:25px;background:#cfd2d5;"></div>
<div class="a" style="left:1310px;top:244px;width:20px;height:18px;background:#fff;border:1px solid #e1e4e7"></div>
<svg class="a" style="left:1301px;top:236px;" width="20" height="20" viewBox="0 0 20 20"><circle cx="10" cy="10" r="8.6" fill="#c9302c"/><path d="M6.3 6.3L13.7 13.7M13.7 6.3L6.3 13.7" stroke="#fff" stroke-width="2.6"/></svg>
<div class="a" style="left:1343.5px;top:235px;width:1px;height:25px;background:#cfd2d5;"></div>
<svg class="a" style="left:1352px;top:232px;" width="36" height="32" viewBox="0 0 36 32"><path d="M31 3L22 14" stroke="#d0605d" stroke-width="3" stroke-linecap="round"/><path d="M17 11L26 17L18 28Q11 29 4 25Z" fill="#d9bd74"/><path d="M15 15L23 21M13 18L21 24" stroke="#a37b3c" stroke-width="1.3"/><path d="M7 28Q14 31 22 28" stroke="#b9bcc0" stroke-width="2" fill="none"/></svg>
<svg class="a" style="left:1600px;top:237px;" width="32" height="26" viewBox="0 0 32 26"><path d="M3 10H8Q10 3 17 3Q21 3 23 6" fill="none" stroke="#3d94dd" stroke-width="3.6" stroke-linecap="round"/><path d="M29 15H24Q22 22 15 22Q11 22 9 19" fill="none" stroke="#3d94dd" stroke-width="3.6" stroke-linecap="round"/><circle cx="16" cy="12.5" r="3.4" fill="#3d94dd"/></svg>
<svg class="a" style="left:1639.5px;top:247.5px;" width="9" height="5" viewBox="0 0 9 5"><path d="M0 0H9L4.5 5Z" fill="#222"/></svg>
<div class="a" style="left:1662.5px;top:235px;width:1px;height:25px;background:#cfd2d5;"></div>
<svg class="a" style="left:1672px;top:233px;" width="28" height="29" viewBox="0 0 28 29"><path d="M21.5 9.5A9.5 9.5 0 1 0 22.5 19" fill="none" stroke="#c5ccd5" stroke-width="6.4"/><path d="M21.5 9.5A9.5 9.5 0 1 0 22.5 19" fill="none" stroke="#e8eef6" stroke-width="4"/><path d="M15 3.5H25.5V14Z" fill="#e8eef6" stroke="#c5ccd5" stroke-width="1.2"/></svg>
<svg class="a" style="left:0;top:0" width="1730" height="1226" viewBox="0 0 1730 1226"><rect x="1228.5" y="424.4" width="410.8" height="45.2" fill="#eb5249" stroke="#111" stroke-width="1.5"/><rect x="1228.5" y="479.9" width="410.8" height="45.2" fill="#eb5249" stroke="#111" stroke-width="1.5"/><rect x="1228.5" y="535.5" width="391.2" height="45.2" fill="#accd6b" stroke="#111" stroke-width="1.5"/><rect x="1228.5" y="591.0" width="391.2" height="45.2" fill="#accd6b" stroke="#111" stroke-width="1.5"/><rect x="1228.5" y="646.5" width="391.2" height="45.2" fill="#accd6b" stroke="#111" stroke-width="1.5"/><rect x="1228.5" y="702.0" width="391.2" height="45.2" fill="#accd6b" stroke="#111" stroke-width="1.5"/><rect x="1228.5" y="757.5" width="88.0" height="45.2" fill="#accd6b" stroke="#111" stroke-width="1.5"/><rect x="1228.5" y="813.0" width="88.0" height="45.2" fill="#accd6b" stroke="#111" stroke-width="1.5"/><rect x="1228.5" y="868.5" width="52.8" height="45.2" fill="#accd6b" stroke="#111" stroke-width="1.5"/><rect x="1228.5" y="924.0" width="52.8" height="45.2" fill="#accd6b" stroke="#111" stroke-width="1.5"/><path d="M1228.45 979.5V1024.7" stroke="#111" stroke-width="1.5"/><path d="M1228.45 1051.5H1638.45" stroke="#111" stroke-width="1.5"/><path d="M1228.5 1051.5V1067" stroke="#111" stroke-width="1.5"/><path d="M1331.0 1051.5V1067" stroke="#111" stroke-width="1.5"/><path d="M1433.5 1051.5V1067" stroke="#111" stroke-width="1.5"/><path d="M1536.0 1051.5V1067" stroke="#111" stroke-width="1.5"/><path d="M1638.5 1051.5V1067" stroke="#111" stroke-width="1.5"/></svg>
<div class="t" style="right:537.7px;top:436.7px;font-size:27px;color:#111;transform:scaleX(0.975);transform-origin:100% 0">PriceMedium</div>
<div class="t" style="right:537.7px;top:492.2px;font-size:27px;color:#111;transform:scaleX(0.975);transform-origin:100% 0">QtyMedium</div>
<div class="t" style="right:537.7px;top:547.7px;font-size:27px;color:#111;transform:scaleX(0.975);transform-origin:100% 0">PriceLarge</div>
<div class="t" style="right:537.7px;top:603.2px;font-size:27px;color:#111;transform:scaleX(0.975);transform-origin:100% 0">PriceSmall</div>
<div class="t" style="right:537.7px;top:658.7px;font-size:27px;color:#111;transform:scaleX(0.975);transform-origin:100% 0">QtyLarge</div>
<div class="t" style="right:537.7px;top:714.2px;font-size:27px;color:#111;transform:scaleX(0.975);transform-origin:100% 0">QtySmall</div>
<div class="t" style="right:537.7px;top:769.7px;font-size:27px;color:#111;transform:scaleX(0.975);transform-origin:100% 0">PriceCake</div>
<div class="t" style="right:537.7px;top:825.2px;font-size:27px;color:#111;transform:scaleX(0.975);transform-origin:100% 0">QtyCake</div>
<div class="t" style="right:537.7px;top:880.7px;font-size:27px;color:#111;transform:scaleX(0.975);transform-origin:100% 0">PriceChoc</div>
<div class="t" style="right:537.7px;top:936.2px;font-size:27px;color:#111;transform:scaleX(0.975);transform-origin:100% 0">QtyChoc</div>
<div class="t" style="right:537.7px;top:991.7px;font-size:27px;color:#111;transform:scaleX(0.975);transform-origin:100% 0">QtyPentalty</div>
<div class="t" style="left:1196.5px;top:1101px;width:40px;height:30px;font-size:27.5px;color:#111;text-align:center;transform:rotate(-90deg);transform-origin:20px 0">0.0</div>
<div class="t" style="left:1299.0px;top:1101px;width:40px;height:30px;font-size:27.5px;color:#111;text-align:center;transform:rotate(-90deg);transform-origin:20px 0">0.2</div>
<div class="t" style="left:1401.5px;top:1101px;width:40px;height:30px;font-size:27.5px;color:#111;text-align:center;transform:rotate(-90deg);transform-origin:20px 0">0.4</div>
<div class="t" style="left:1504.0px;top:1101px;width:40px;height:30px;font-size:27.5px;color:#111;text-align:center;transform:rotate(-90deg);transform-origin:20px 0">0.6</div>
<div class="t" style="left:1606.5px;top:1101px;width:40px;height:30px;font-size:27.5px;color:#111;text-align:center;transform:rotate(-90deg);transform-origin:20px 0">0.8</div>
</body></html>
